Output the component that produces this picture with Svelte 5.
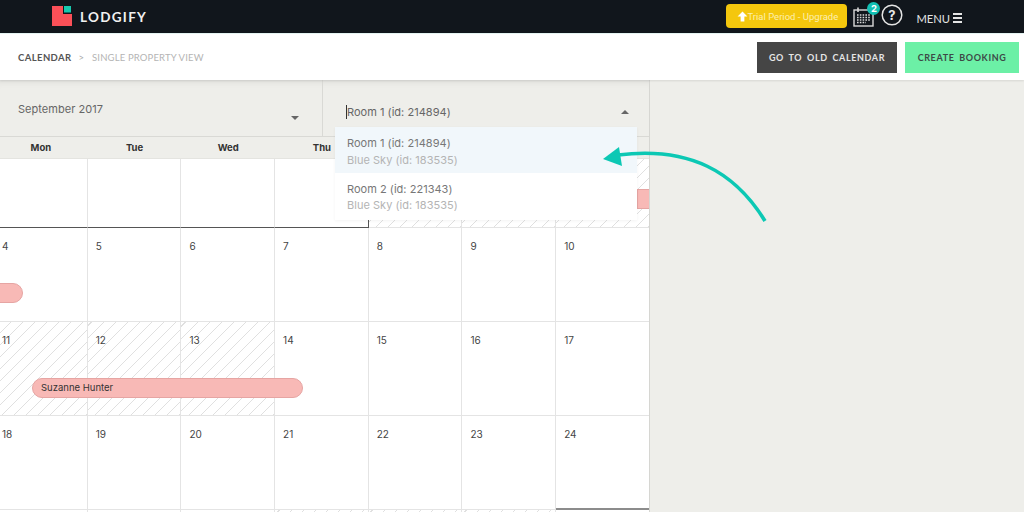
<script>
  // Fri, Sat and Sun sit behind the open dropdown in this view
  const weekdays = ["Mon", "Tue", "Wed", "Thu"];

  // kind: "" plain, "h" hatched, "past" / "corner" / "past-end" draw the dark edge of the range
  const weeks = [
    {
      cls: "first",
      days: [
        { kind: "past" }, { kind: "past" }, { kind: "past" }, { kind: "past corner" },
        { kind: "h" }, { kind: "h" }, { kind: "h" }
      ],
      events: [{ left: 643, width: 40, top: 30, name: "", cut: true }]
    },
    {
      days: [4, 5, 6, 7, 8, 9, 10].map((n) => ({ n, kind: "" })),
      events: [{ left: -61, width: 90, top: 55, name: "" }]
    },
    {
      days: [11, 12, 13].map((n) => ({ n, kind: "h" })).concat([14, 15, 16, 17].map((n) => ({ n, kind: "" }))),
      events: [{ left: 38, width: 271, top: 56, name: "Suzanne Hunter" }]
    },
    {
      days: [18, 19, 20, 21, 22, 23].map((n) => ({ n, kind: "" })).concat([{ n: 24, kind: "past-end" }]),
      events: []
    },
    {
      cls: "last",
      days: [
        { kind: "" }, { kind: "" }, { kind: "" }, { kind: "h" }, { kind: "h" }, { kind: "h" }, { kind: "" }
      ],
      events: []
    }
  ];

  const rooms = [
    { name: "Room 1 (id: 214894)", parent: "Blue Sky (id: 183535)", active: true },
    { name: "Room 2 (id: 221343)", parent: "Blue Sky (id: 183535)", active: false }
  ];
</script>

<div class="page">
  <header class="topbar">
    <div class="brand">
      <svg class="logo" width="20" height="20" viewBox="0 0 20 20">
        <path d="M0 0H11V8H20V20H0Z" fill="#fb5058" />
        <rect x="12" y="0" width="7" height="6.5" fill="#17c9ae" />
      </svg>
      <span class="brand-name">LODGIFY</span>
    </div>
    <div class="top-actions">
      <button class="trial">
        <svg width="11" height="11" viewBox="0 0 10 10"><path d="M5 0.5L9.5 5H6.7V9.5H3.3V5H0.5Z" fill="#fff" /></svg>
        Trial Period - Upgrade
      </button>
      <div class="cal-icon">
        <svg width="22" height="21" viewBox="0 0 22 21" fill="none" stroke="#d9d9d9">
          <rect x="1" y="4" width="19" height="16" stroke-width="1.4" />
          <path d="M5 1.5V6M16 1.5V6" stroke-width="1.6" />
          <path d="M4 9H17M4 11.5H17M4 14H17M4 16.5H13" stroke-width="1.3" stroke-dasharray="1.6 1.2" />
        </svg>
        <span class="badge">2</span>
      </div>
      <svg class="help" width="22" height="22" viewBox="0 0 22 22">
        <circle cx="11" cy="11" r="9.8" fill="none" stroke="#e4e4e4" stroke-width="1.5" />
        <text x="11" y="15.6" text-anchor="middle" class="help-mark">?</text>
      </svg>
      <div class="menu">
        MENU
        <span class="burger"><i></i><i></i><i></i></span>
      </div>
    </div>
  </header>

  <div class="subbar">
    <div class="crumbs">
      <b>CALENDAR</b><span class="sep">&gt;</span><span class="crumb-now">SINGLE PROPERTY VIEW</span>
    </div>
    <div class="sub-actions">
      <button class="btn dark">GO TO OLD CALENDAR</button>
      <button class="btn green">CREATE BOOKING</button>
    </div>
  </div>

  <main class="content">
    <section class="calendar">
      <div class="filters">
        <div class="filter month">
          <span>September 2017</span>
          <i class="caret down"></i>
        </div>
        <div class="filter room">
          <span class="room-value">Room 1 (id: 214894)</span>
          <i class="caret up"></i>
          <ul class="dropdown">
            {#each rooms as room}
              <li class:active={room.active}>
                <span class="room-name">{room.name}</span>
                <span class="room-parent">{room.parent}</span>
              </li>
            {/each}
          </ul>
        </div>
      </div>

      <div class="weekdays">
        {#each weekdays as day}
          <div>{day}</div>
        {/each}
      </div>

      <div class="weeks">
        {#each weeks as week}
          <div class="week {week.cls ?? ''}">
            {#each week.days as day}
              <div class="day {day.kind}">{day.n ?? ""}</div>
            {/each}
            {#each week.events as ev}
              <div class="event" class:cut={ev.cut} style="left:{ev.left}px;width:{ev.width}px;top:{ev.top}px">{ev.name}</div>
            {/each}
          </div>
        {/each}
      </div>
    </section>
    <div class="rest"></div>
  </main>

  <svg class="arrow" width="180" height="90" viewBox="600 140 180 90" fill="none">
    <path d="M765 221C735 172 690 146 618 155" stroke="#0cc8b4" stroke-width="3.6" />
    <path d="M603 159L619 147L622 166Z" fill="#0cc8b4" />
  </svg>
</div>

<style>
  :global(body) {
    margin: 0;
  }

  .page {
    position: relative;
    width: 1024px;
    height: 512px;
    overflow: hidden;
    display: flex;
    flex-direction: column;
    background: #eeeeea;
    font-family: Inter, "Liberation Sans", sans-serif;
  }

  /* top bar */
  .topbar {
    height: 33px;
    flex: none;
    display: flex;
    justify-content: space-between;
    align-items: center;
    padding: 0 62px 0 52px;
    background: #11161c;
  }
  .brand {
    display: flex;
    align-items: center;
    gap: 8px;
    margin-top: -2px;
  }
  .brand-name {
    font-family: Lato, sans-serif;
    font-weight: 700;
    font-size: 13.5px;
    letter-spacing: 1.3px;
    color: #f1f1f1;
    margin-top: 2px;
  }
  .top-actions {
    display: flex;
    align-items: center;
  }
  .trial {
    width: 121px;
    height: 24px;
    margin-top: -1px;
    padding: 0 0 0 1px;
    border: none;
    border-radius: 4px;
    background: #f4c70d;
    color: #fcefb0;
    font-family: Roboto, sans-serif;
    font-size: 9.5px;
    display: flex;
    align-items: center;
    justify-content: center;
    gap: 0;
  }
  .cal-icon {
    position: relative;
    width: 22px;
    height: 21px;
    margin-left: 6px;
    margin-top: -1px;
  }
  .badge {
    position: absolute;
    top: -4px;
    right: -5px;
    width: 13px;
    height: 13px;
    border-radius: 50%;
    background: #12c0b4;
    color: #fff;
    font-size: 9.5px;
    font-weight: 700;
    line-height: 13px;
    text-align: center;
  }
  .help {
    margin-left: 6px;
    margin-top: -3px;
  }
  .help-mark {
    font-size: 13px;
    font-weight: 700;
    fill: #e8e8e8;
  }
  .menu {
    display: flex;
    align-items: center;
    gap: 3px;
    margin-left: 13px;
    margin-top: 3px;
    font-family: Lato, sans-serif;
    font-size: 11.2px;
    color: #e4e4e4;
  }
  .burger {
    display: flex;
    flex-direction: column;
    gap: 2px;
    width: 9px;
  }
  .burger i {
    height: 2px;
    background: #e4e4e4;
  }

  /* breadcrumb bar */
  .subbar {
    height: 47px;
    flex: none;
    display: flex;
    justify-content: space-between;
    align-items: center;
    box-sizing: border-box;
    padding: 0 5px 0 18px;
    background: #fff;
    border-top: 1px solid #e4f3f1;
    box-shadow: 0 1px 2px rgba(0, 0, 0, 0.1);
    position: relative;
    z-index: 2;
  }
  .crumbs {
    display: flex;
    align-items: center;
    font-family: Lato, sans-serif;
    font-size: 9.5px;
    margin-top: 1px;
  }
  .crumbs b {
    color: #555;
    font-weight: 700;
    letter-spacing: 0.4px;
  }
  .sep {
    margin: 0 8px 0 7px;
    color: #aaa;
  }
  .crumb-now {
    color: #b4b4b4;
    letter-spacing: 0.15px;
  }
  .sub-actions {
    display: flex;
    gap: 8px;
    margin-top: 1px;
  }
  .btn {
    height: 31px;
    padding: 0;
    border: none;
    font-family: Lato, sans-serif;
    font-weight: 700;
    font-size: 9px;
    letter-spacing: 0.62px;
    word-spacing: 2px;
  }
  .dark {
    width: 140px;
    background: #454545;
    color: #e6e6e6;
  }
  .green {
    width: 114px;
    background: #6cf0a6;
    color: #3c4a46;
  }

  /* calendar */
  .content {
    flex: 1;
    min-height: 0;
    display: flex;
  }
  .calendar {
    width: 649px;
    flex: none;
    border-right: 1px solid #d6d6d2;
    overflow: hidden;
    position: relative;
  }
  .rest {
    flex: 1;
    background: #eeeeea;
  }
  .filters {
    height: 56px;
    display: flex;
    border-bottom: 1px solid #d9d9d5;
    box-shadow: inset 0 8px 7px -6px rgba(0, 0, 0, 0.07);
    color: #666;
    font-size: 11px;
    letter-spacing: 0.03px;
  }
  .filter {
    position: relative;
  }
  .month {
    width: 323px;
    flex: none;
    box-sizing: border-box;
    padding: 22px 0 0 18px;
    border-right: 1px solid #d9d9d5;
  }
  .room {
    flex: 1;
    padding: 25px 0 0 23px;
  }
  .room-value {
    border-left: 1px solid #333;
  }
  .caret {
    position: absolute;
    width: 0;
    height: 0;
    border-left: 4px solid transparent;
    border-right: 4px solid transparent;
  }
  .caret.down {
    right: 23px;
    top: 36px;
    border-top: 4px solid #666;
  }
  .caret.up {
    right: 20px;
    top: 30px;
    border-bottom: 4px solid #666;
  }
  .dropdown {
    position: absolute;
    z-index: 5;
    top: 47px;
    left: 12px;
    width: 302px;
    margin: 0;
    padding: 0 0 2px;
    list-style: none;
    background: #fff;
    box-shadow: 0 1px 3px rgba(0, 0, 0, 0.05);
  }
  .dropdown li {
    height: 45.6px;
    box-sizing: border-box;
    padding: 9px 0 0 12px;
    display: flex;
    flex-direction: column;
    gap: 2px;
    line-height: 14.5px;
  }
  .dropdown li.active {
    background: #f1f7fb;
  }
  .room-name {
    color: #777;
  }
  .room-parent {
    color: #b4b4b4;
  }

  .weekdays {
    height: 21px;
    margin-left: -6px;
    display: grid;
    grid-template-columns: repeat(7, 93.7px);
    border-bottom: 1px solid #e4e4e0;
    font-size: 9.5px;
    font-weight: 700;
    color: #333;
  }
  .weekdays div {
    text-align: center;
    line-height: 21px;
  }

  .weeks {
    margin-left: -6px;
    background: #fff;
    height: 400px;
  }
  .week {
    position: relative;
    height: 94px;
    box-sizing: border-box;
    display: grid;
    grid-template-columns: repeat(7, 93.7px);
  }
  .week.first {
    height: 69px;
  }
  .day {
    box-sizing: border-box;
    padding: 12px 0 0 8px;
    border-right: 1px solid #e4e4e4;
    border-bottom: 1px solid #e4e4e4;
    font-size: 10px;
    color: #444;
  }
  .day.h {
    background: repeating-linear-gradient(-45deg, #e0e0e0 0 1.2px, #fff 1.2px 8.5px);
  }
  .day.past {
    border-bottom-color: #555;
  }
  .day.corner {
    border-right-color: #555;
  }
  .day.past-end {
    border-bottom: 2px solid #8c8c8c;
  }
  .event {
    position: absolute;
    height: 20px;
    box-sizing: border-box;
    padding-left: 8px;
    border: 1px solid #e6a5a3;
    border-radius: 10px;
    background: #f8b9b6;
    color: #333;
    font-size: 9.5px;
    line-height: 18px;
  }
  .event.cut {
    border-radius: 0;
  }

  /* callout pointing at the open option */
  .arrow {
    position: absolute;
    left: 600px;
    top: 140px;
    z-index: 6;
  }
</style>
